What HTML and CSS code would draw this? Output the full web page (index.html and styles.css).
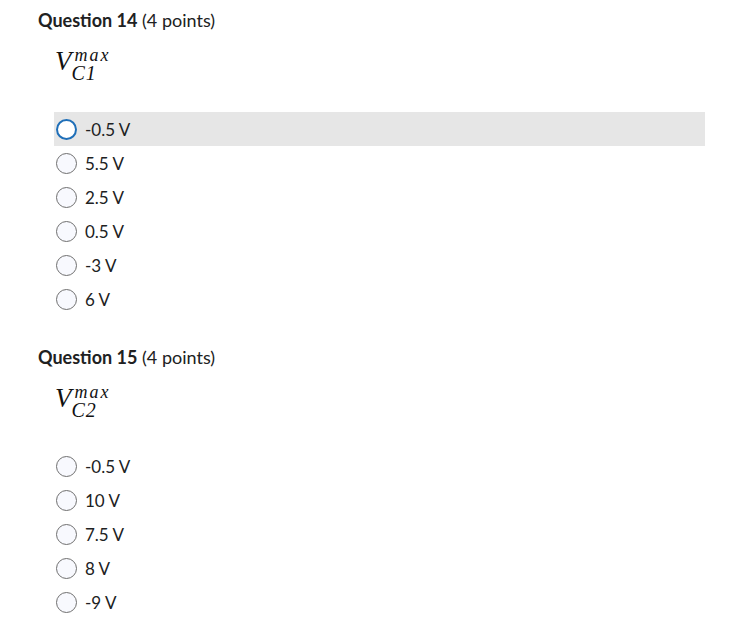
FILE: index.html
```html
<!DOCTYPE html>
<html>
<head>
<meta charset="utf-8">
<link rel="stylesheet" href="styles.css">
</head>
<body>
<div class="quiz">
  <section class="question">
    <h2 class="q-title"><strong>Question 14</strong> (4 points)</h2>
    <div class="math">
      <span class="m-base">V</span><span class="m-scripts"><span class="m-sup">max</span><span class="m-sub">C1</span></span>
    </div>
    <ul class="options">
      <li class="option hover"><span class="radio"></span><span class="label">-0.5 V</span></li>
      <li class="option"><span class="radio"></span><span class="label">5.5 V</span></li>
      <li class="option"><span class="radio"></span><span class="label">2.5 V</span></li>
      <li class="option"><span class="radio"></span><span class="label">0.5 V</span></li>
      <li class="option"><span class="radio"></span><span class="label">-3 V</span></li>
      <li class="option"><span class="radio"></span><span class="label">6 V</span></li>
    </ul>
  </section>
  <section class="question">
    <h2 class="q-title"><strong>Question 15</strong> (4 points)</h2>
    <div class="math">
      <span class="m-base">V</span><span class="m-scripts"><span class="m-sup">max</span><span class="m-sub">C2</span></span>
    </div>
    <ul class="options">
      <li class="option"><span class="radio"></span><span class="label">-0.5 V</span></li>
      <li class="option"><span class="radio"></span><span class="label">10 V</span></li>
      <li class="option"><span class="radio"></span><span class="label">7.5 V</span></li>
      <li class="option"><span class="radio"></span><span class="label">8 V</span></li>
      <li class="option"><span class="radio"></span><span class="label">-9 V</span></li>
    </ul>
  </section>
</div>
</body>
</html>
```
FILE: styles.css
```css
html, body {
  margin: 0;
  padding: 0;
  background: #ffffff;
}
body {
  font-family: Lato, "Open Sans", sans-serif;
  color: #202122;
}
.quiz {
  padding: 9px 0 0 38px;
  display: flex;
  flex-direction: column;
  gap: 30px;
}
.q-title {
  margin: 0;
  font-size: 18px;
  line-height: 22px;
  font-weight: 400;
  color: #202122;
}
.q-title strong {
  font-weight: 700;
}
.math {
  display: flex;
  align-items: flex-start;
  height: 81px;
  padding: 17px 0 0 17px;
  box-sizing: border-box;
  font-family: "Liberation Serif", "DejaVu Serif", serif;
  font-style: italic;
  color: #111;
}
.m-base {
  font-size: 27px;
  line-height: 27px;
}
.m-scripts {
  display: flex;
  flex-direction: column;
  margin-top: 0;
}
.m-sup {
  font-size: 18px;
  line-height: 15px;
  letter-spacing: 2px;
  margin-left: 3px;
}
.m-sub {
  font-size: 20px;
  line-height: 20px;
  margin-left: 0;
  letter-spacing: 1px;
}
.options {
  list-style: none;
  margin: 0 0 0 16px;
  padding: 0;
  width: 651px;
}
.option {
  height: 34px;
  display: flex;
  align-items: center;
  gap: 8px;
  padding-left: 2px;
  font-size: 17px;
}
.option.hover {
  background: #e6e6e6;
}
.radio {
  width: 21px;
  height: 21px;
  flex: none;
  box-sizing: border-box;
  border: 1.5px solid #6f6f6f;
  border-radius: 50%;
  background: #f8f9fe;
}
.option.hover .radio {
  border: 2px solid #1f6fb8;
  background: #ffffff;
}
.label {
  color: #202122;
}
```
